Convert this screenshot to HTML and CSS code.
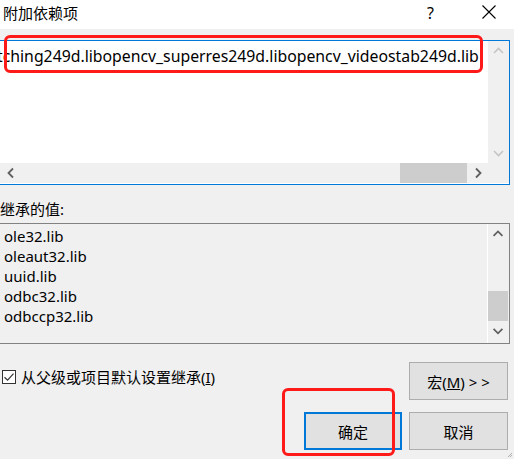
FILE: index.html
```html
<!DOCTYPE html>
<html lang="zh-CN">
  <head>
    <meta charset="utf-8">
    <title>附加依赖项</title>
    <link rel="stylesheet" href="styles.css">
  </head>
  <body>
    <div class="dialog">
      <div class="titlebar">
        <span class="title">附加依赖项</span>
        <span class="help">?</span>
        <svg class="close" width="14" height="14" viewBox="0 0 14 14">
          <path d="M0.5 0.5L13.5 13.5M13.5 0.5L0.5 13.5" stroke="#000" stroke-width="1.1" fill="none"/>
        </svg>
      </div>

      <div class="editor">
        <div class="editor-text"><span class="scrolled">tching249d.libopencv_superres249d.libopencv_videostab249d.lib</span></div>
        <div class="vscroll">
          <svg width="21" height="20" viewBox="0 0 21 20"><path d="M6 12L10.5 7.5L15 12" stroke="#c5c5c5" stroke-width="1.6" fill="none"/></svg>
          <svg width="21" height="20" viewBox="0 0 21 20"><path d="M6 8L10.5 12.5L15 8" stroke="#c5c5c5" stroke-width="1.6" fill="none"/></svg>
        </div>
        <div class="hscroll">
          <svg width="20" height="20" viewBox="0 0 20 20"><path d="M12 5.5L7.5 10L12 14.5" stroke="#606060" stroke-width="1.8" fill="none"/></svg>
          <div class="hthumb"></div>
          <svg width="20" height="20" viewBox="0 0 20 20"><path d="M8 5.5L12.5 10L8 14.5" stroke="#606060" stroke-width="1.8" fill="none"/></svg>
        </div>
        <div class="corner"></div>
      </div>
      <div class="mark mark-text"></div>

      <div class="caption">继承的值:</div>

      <div class="listbox">
        <ul class="items">
          <li>ole32.lib</li>
          <li>oleaut32.lib</li>
          <li>uuid.lib</li>
          <li>odbc32.lib</li>
          <li>odbccp32.lib</li>
        </ul>
        <div class="lscroll">
          <svg width="20" height="20" viewBox="0 0 20 20"><path d="M5.5 12L10 7.5L14.5 12" stroke="#606060" stroke-width="1.8" fill="none"/></svg>
          <div class="lthumb"></div>
          <svg width="20" height="20" viewBox="0 0 20 20"><path d="M5.5 8L10 12.5L14.5 8" stroke="#606060" stroke-width="1.8" fill="none"/></svg>
        </div>
      </div>

      <div class="footer">
        <div class="row">
          <label class="inherit">
            <svg class="check" width="14" height="14" viewBox="0 0 14 14">
              <rect x="0.5" y="0.5" width="13" height="13" fill="#fff" stroke="#333"/>
              <path d="M2.5 7.2L5.6 10.2L11.5 3.6" stroke="#333" stroke-width="1.2" fill="none"/>
            </svg>
            <span>从父级或项目默认设置继承(<u>I</u>)</span>
          </label>
          <button class="btn">宏(<u>M</u>) &gt; &gt;</button>
        </div>
        <div class="row row-end">
          <button class="btn btn-default">确定</button>
          <button class="btn">取消</button>
        </div>
      </div>
      <div class="mark mark-ok"></div>
      <svg class="grip" width="6" height="6" viewBox="0 0 6 6">
        <path d="M5 1L1 5M5 3L3 5" stroke="#b0b0b0" stroke-width="1"/>
      </svg>
    </div>
  </body>
</html>
```

FILE: styles.css
```css
body {
  margin: 0;
  background: #f0f0f0;
  font-family: "Noto Sans", "Noto Sans CJK SC", sans-serif;
  font-size: 15px;
  color: #000;
  overflow: hidden;
}
.dialog {
  position: relative;
  width: 514px;
  height: 459px;
  display: flex;
  flex-direction: column;
}

.titlebar {
  height: 29px;
  background: #fff;
  display: flex;
  align-items: center;
}
.title {
  padding-left: 3px;
  flex: 1;
  margin-top: -5px;
}
.help {
  font-size: 16px;
  margin-right: 48px;
  margin-top: -4px;
}
.close {
  margin-right: 18px;
  margin-top: -5px;
}

.editor {
  margin-top: 11px;
  width: 509px;
  height: 143px;
  border: 1px solid #0078d7;
  border-left: none;
  display: grid;
  grid-template-columns: 488px 21px;
  grid-template-rows: 122px 20px;
  background: #fff;
}
.editor-text {
  overflow: hidden;
  white-space: nowrap;
  font-size: 15.8px;
  padding-top: 4px;
}
.scrolled {
  display: inline-block;
  margin-left: -3px;
}
.vscroll {
  background: #f0f0f0;
  display: flex;
  flex-direction: column;
  justify-content: space-between;
}
.hscroll {
  background: #f0f0f0;
  display: flex;
  align-items: center;
}
.hscroll svg:first-child {
  margin-left: 1px;
}
.hthumb {
  margin-left: 379px;
  width: 67px;
  height: 20px;
  background: #cdcdcd;
}
.hscroll svg:last-child {
  margin-left: 1px;
}
.corner {
  background: #f0f0f0;
}

.caption {
  margin-top: 14px;
  height: 20px;
  line-height: 20px;
}

.listbox {
  margin-top: 4px;
  width: 509px;
  height: 119px;
  border: 1px solid #828282;
  border-left: none;
  display: flex;
}
.items {
  list-style: none;
  margin: 0;
  padding: 2px 0 0 4px;
  width: 483px;
  border-right: 1px solid #fff;
}
.items li {
  height: 20px;
  line-height: 20px;
}
.lscroll {
  width: 20px;
  display: flex;
  flex-direction: column;
}
.lthumb {
  margin-top: 47px;
  height: 31px;
  background: #cdcdcd;
}
.lscroll svg:last-child {
  margin-top: auto;
  margin-bottom: 2px;
}

.footer {
  margin-top: 18px;
  padding-right: 6px;
  display: flex;
  flex-direction: column;
  gap: 12px;
}
.row {
  display: flex;
  align-items: center;
  justify-content: space-between;
}
.row-end {
  justify-content: flex-end;
  gap: 7px;
}
.inherit {
  display: flex;
  align-items: center;
  gap: 5px;
  padding-left: 2px;
  margin-top: -9px;
}
.inherit span {
  line-height: 20px;
}
.btn {
  width: 99px;
  height: 38px;
  background: #e1e1e1;
  border: 1px solid #adadad;
  font-family: "Noto Sans", "Noto Sans CJK SC", sans-serif;
  font-size: 15px;
  color: #000;
  padding: 0;
}
.btn-default {
  width: 98px;
  border: 2px solid #0078d7;
}

.mark {
  position: absolute;
  border: 3px solid #ff1a1a;
  border-radius: 6px;
}
.mark-text {
  left: 4px;
  top: 35px;
  width: 473px;
  height: 32px;
}
.mark-ok {
  left: 282px;
  top: 388px;
  width: 107px;
  height: 62px;
}
.grip {
  position: absolute;
  right: 1px;
  bottom: 1px;
}
```
